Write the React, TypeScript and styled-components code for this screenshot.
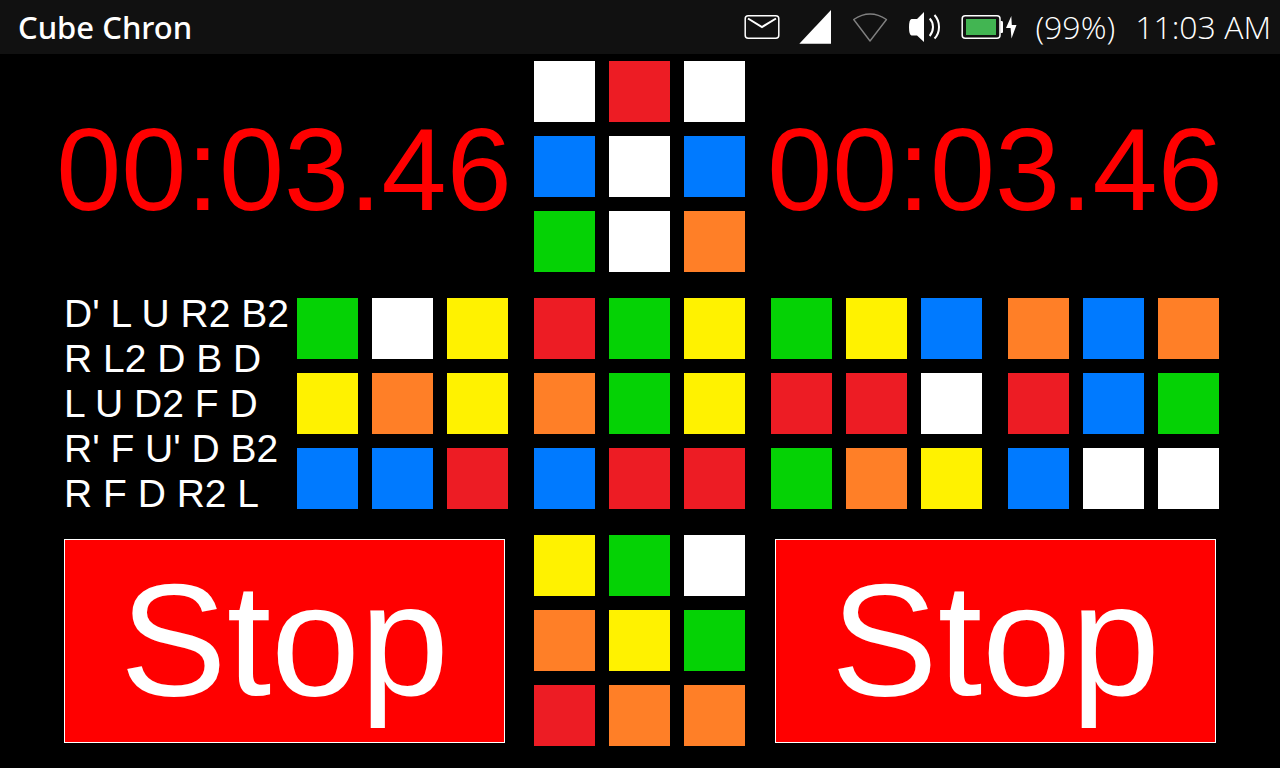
import React from 'react';
import styled, { createGlobalStyle } from 'styled-components';

const GlobalStyle = createGlobalStyle`
  *, *::before, *::after { box-sizing: border-box; }
  html, body { margin: 0; background: #000; }
  body { font-family: "Liberation Sans", Arial, sans-serif; color: #fff; }
`;

const Page = styled.div`
  min-height: 100vh;
  display: flex;
  flex-direction: column;
  background: #000;
`;

const StatusBar = styled.header`
  height: 54px;
  padding: 0 9px 0 18px;
  display: flex;
  align-items: center;
  justify-content: space-between;
  background: #111;
  font-family: "Open Sans", "Noto Sans", sans-serif;
  line-height: 54px;
  white-space: nowrap;
`;

const AppTitle = styled.h1`
  margin: 0;
  font-family: "Noto Sans", sans-serif;
  font-size: 31px;
  font-weight: 500;
`;

const Indicators = styled.div`
  display: flex;
  align-items: center;
  gap: 18px;
`;

const Readings = styled.div`
  display: flex;
  gap: 20px;
  font-size: 32px;
  font-weight: 320;
`;

const Icon = styled.svg`
  display: block;
  height: 54px;
  flex: none;
`;

const Board = styled.main`
  padding: 7px 61px 22px 60px;
  display: grid;
  grid-template-columns: repeat(5, minmax(0, 1fr));
  gap: 26px;
`;

const Face = styled.div`
  display: grid;
  grid-template-columns: repeat(3, 1fr);
  gap: 14px;
`;

const stickers = {
  W: '#ffffff',
  R: '#ed1c24',
  B: '#007aff',
  G: '#05d205',
  O: '#ff7f27',
  Y: '#fff200',
};

type StickerKey = keyof typeof stickers;

const Sticker = styled.div<{ $color: StickerKey }>`
  aspect-ratio: 1;
  background: ${({ $color }) => stickers[$color]};
`;

const Timer = styled.div`
  grid-column: span 2;
  padding-top: 6px;
  display: flex;
  align-items: center;
  justify-content: center;
  color: #f00;
  font-size: 117px;
  line-height: 136px;
  white-space: nowrap;
`;

const Scramble = styled.div`
  margin: -7px 0;
  padding-left: 4px;
  align-self: start;
  font-size: 39px;
  line-height: 45px;
  white-space: nowrap;
`;

const ScrambleLine = styled.div``;

const StopButton = styled.button`
  grid-column: span 2;
  margin: 4px 3px 3px 4px;
  padding: 0 0 2px;
  display: flex;
  align-items: center;
  justify-content: center;
  background: #f00;
  border: 1px solid #fff;
  border-radius: 0;
  color: #fff;
  font-family: inherit;
  font-size: 160px;
  line-height: 180px;
  cursor: pointer;
`;

const scramble = ["D' L U R2 B2", 'R L2 D B D', 'L U D2 F D', "R' F U' D B2", 'R F D R2 L'];

const faces = {
  up: 'WRWBWBGWO',
  left: 'GWYYOYBBR',
  front: 'RGYOGYBRR',
  right: 'GYBRRWGOY',
  back: 'OBORBGBWW',
  down: 'YGWOYGROO',
};

function CubeFace({ name }: { name: keyof typeof faces }) {
  return (
    <Face role="img" aria-label={`${name} face`}>
      {faces[name].split('').map((c, i) => (
        <Sticker key={i} $color={c as StickerKey} />
      ))}
    </Face>
  );
}

function MailIcon() {
  return (
    <Icon width="37" viewBox="0 0 37 54" fill="none" stroke="#fff" aria-hidden="true">
      <rect x="2.2" y="15.7" width="33.6" height="22.6" rx="3" strokeWidth="1.5" />
      <path d="M5 18.5 19 27l14-8.5" strokeWidth="2" />
    </Icon>
  );
}

function SignalIcon() {
  return (
    <Icon width="36" viewBox="0 0 36 54" aria-hidden="true">
      <path d="M1.3 43.7 33 10v33.7Z" fill="#fff" />
    </Icon>
  );
}

function WifiIcon() {
  return (
    <Icon width="38" viewBox="0 0 38 54" fill="none" aria-hidden="true">
      <path d="M1.7 19.5Q18 8.5 34.5 19.5L18 41Z" stroke="#808080" strokeWidth="1.4" strokeLinejoin="round" />
    </Icon>
  );
}

function VolumeIcon() {
  return (
    <Icon width="34" viewBox="0 0 34 54" fill="none" aria-hidden="true">
      <path d="M3.5 19H9l7-7v30l-7-6.5H3.5Q1 35 1 27.3 1 19.5 3.5 19Z" fill="#fff" />
      <path d="M21.7 18.5Q25 22 25 27t-3.3 9M26.5 15Q31 20 31 27t-4.5 11.5" stroke="#fff" strokeWidth="2" />
    </Icon>
  );
}

function BatteryIcon() {
  return (
    <Icon width="57" viewBox="0 0 57 54" fill="none" aria-hidden="true">
      <rect x="2.2" y="15.7" width="37.8" height="22.6" rx="3" stroke="#fff" strokeWidth="1.5" />
      <rect x="6" y="19" width="30" height="16" fill="#42b552" />
      <path d="M40.5 21H42q1 0 1 1.5v9q0 1.5-1 1.5h-1.5Z" fill="#fff" />
      <path d="M51.3 16 46 28h4.6l.9 10.5L56.5 25h-4.7Z" fill="#fff" />
    </Icon>
  );
}

export default function App() {
  return (
    <Page>
      <GlobalStyle />
      <StatusBar>
        <AppTitle>Cube Chron</AppTitle>
        <Indicators>
          <MailIcon />
          <SignalIcon />
          <WifiIcon />
          <VolumeIcon />
          <BatteryIcon />
          <Readings>
            <span>(99%)</span>
            <time>11:03 AM</time>
          </Readings>
        </Indicators>
      </StatusBar>
      <Board>
        <Timer>00:03.46</Timer>
        <CubeFace name="up" />
        <Timer>00:03.46</Timer>
        <Scramble>
          {scramble.map((line) => (
            <ScrambleLine key={line}>{line}</ScrambleLine>
          ))}
        </Scramble>
        <CubeFace name="left" />
        <CubeFace name="front" />
        <CubeFace name="right" />
        <CubeFace name="back" />
        <StopButton type="button">Stop</StopButton>
        <CubeFace name="down" />
        <StopButton type="button">Stop</StopButton>
      </Board>
    </Page>
  );
}
